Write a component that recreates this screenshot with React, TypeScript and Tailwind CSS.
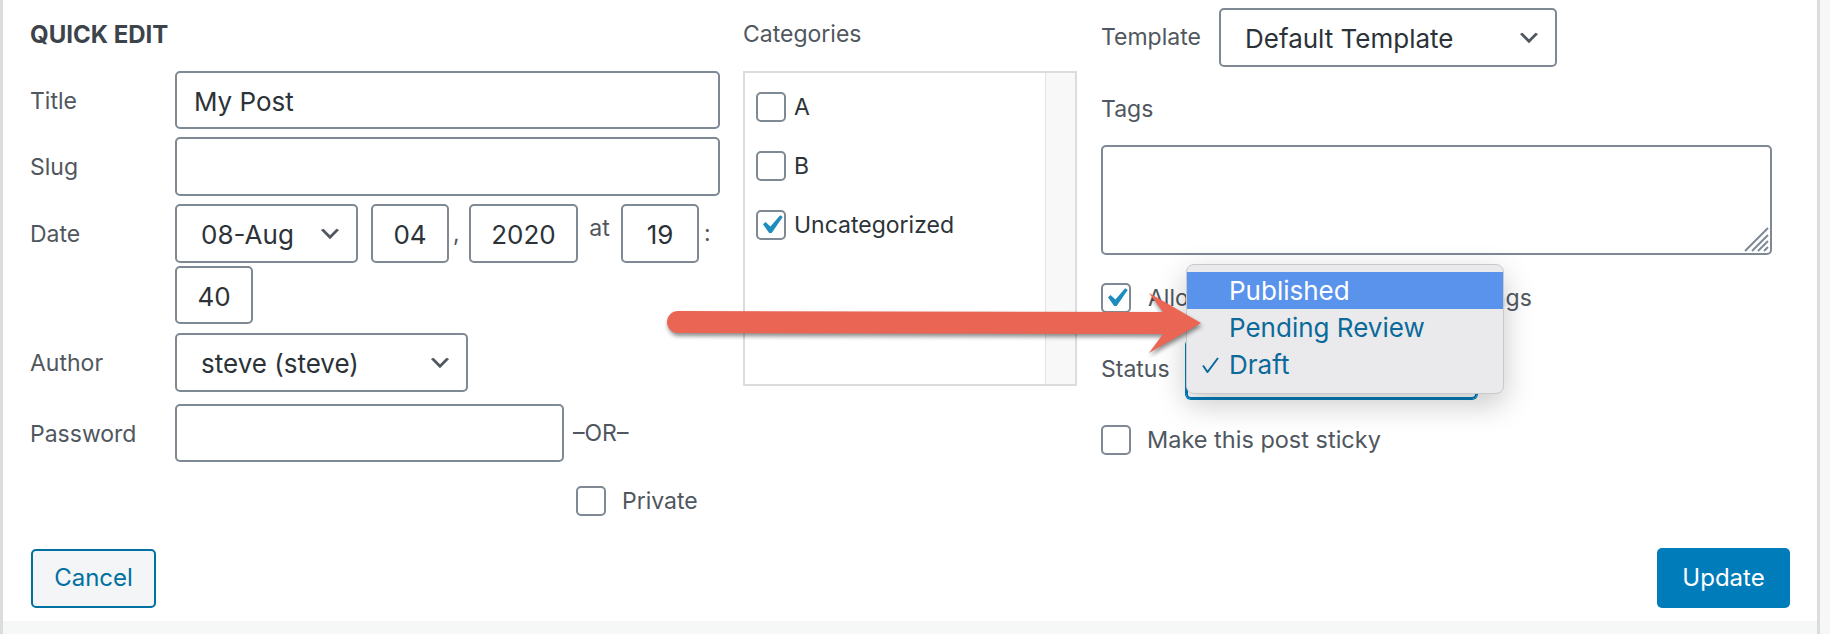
import clsx from "clsx";

type Category = { name: string; checked: boolean };

const categories: Category[] = [
  { name: "A", checked: false },
  { name: "B", checked: false },
  { name: "Uncategorized", checked: true },
];

const statusOptions = [
  { label: "Published", active: true, selected: false },
  { label: "Pending Review", active: false, selected: false },
  { label: "Draft", active: false, selected: true },
];

function Chevron() {
  return (
    <svg viewBox="0 0 20 20" className="h-[26px] w-[26px] shrink-0" fill="#50575e">
      <path d="M5 6l5 5 5-5 2 1-7 7-7-7 2-1z" />
    </svg>
  );
}

function Select({ value, className }: { value: string; className?: string }) {
  return (
    <div
      className={clsx(
        "flex h-[59px] shrink-0 items-center justify-between rounded-[5px] border-2 border-[#7e8993] bg-white pl-[24px] pr-[13px] text-[26px] text-[#2c3338]",
        className
      )}
    >
      <span className="pt-[2px]">{value}</span>
      <Chevron />
    </div>
  );
}

function TextBox({ value = "", className }: { value?: string; className?: string }) {
  return (
    <input
      readOnly
      value={value}
      className={clsx(
        "h-[58px] shrink-0 rounded-[5px] border-2 border-[#7e8993] bg-white px-[17px] pt-[2px] text-[26px] text-[#2c3338] outline-none",
        className
      )}
    />
  );
}

function Checkbox({ checked = false }: { checked?: boolean }) {
  return (
    <span className="flex h-[30px] w-[30px] shrink-0 items-center justify-center rounded-[5px] border-2 border-[#7e8993] bg-white">
      {checked && (
        <svg viewBox="0 0 20 20" className="h-[38px] w-[38px] shrink-0">
          <path fill="#1e8cbe" d="M14.83 4.89l1.34.94-5.81 8.38H9.02L5.78 9.67l1.34-1.25 2.57 2.4z" />
        </svg>
      )}
    </span>
  );
}

function Row({ label, children, className }: { label: string; children: React.ReactNode; className?: string }) {
  return (
    <div className={clsx("flex items-center", className)}>
      <span className="w-[145px] shrink-0 pt-[2px] text-[23px] text-[#50575e]">{label}</span>
      {children}
    </div>
  );
}

export default function App() {
  return (
    <div className="relative flex h-[634px] w-[1830px] overflow-hidden bg-[#f6f7f7] font-['Inter','Noto_Sans',sans-serif]">
      <div className="w-[3px] shrink-0 bg-[#dcdcde]" />

      <div className="flex h-[621px] w-[1814px] shrink-0 flex-col bg-white">
        <div className="flex h-[548px]">
          {/* left column: title, slug, date, author, password */}
          <div className="flex w-[740px] shrink-0 flex-col pl-[27px]">
            <h4 className="mt-[20px] h-[30px] text-[24px] font-bold leading-[30px] text-[#3c434a]">QUICK EDIT</h4>

            <Row label="Title" className="mt-[21px]">
              <TextBox value="My Post" className="w-[545px]" />
            </Row>
            <Row label="Slug" className="mt-[8px]">
              <TextBox className="h-[59px] w-[545px]" />
            </Row>

            <Row label="Date" className="mt-[8px]">
              <div className="flex items-center text-[23px] text-[#50575e]">
                <Select value="08-Aug" className="w-[183px]" />
                <span className="w-[13px]" />
                <TextBox value="04" className="h-[59px] w-[78px] px-0 text-center" />
                <span className="w-[20px] pl-[4px]">,</span>
                <TextBox value="2020" className="h-[59px] w-[109px] px-0 text-center" />
                <span className="w-[43px] pb-[10px] text-center">at</span>
                <TextBox value="19" className="h-[59px] w-[78px] px-0 text-center" />
                <span className="pl-[5px]">:</span>
              </div>
            </Row>
            <div className="mt-[3px] pl-[145px]">
              <TextBox value="40" className="h-[57px] w-[78px] px-0 text-center" />
            </div>

            <Row label="Author" className="mt-[9px]">
              <Select value="steve (steve)" className="h-[58px] w-[293px]" />
            </Row>

            <Row label="Password" className="mt-[12px]">
              <TextBox className="w-[389px]" />
              <em className="ml-[9px] text-[23px] not-italic text-[#50575e]">–OR–</em>
            </Row>

            <label className="ml-[546px] mt-[24px] flex h-[30px] items-center gap-[16px] text-[23px] text-[#50575e]">
              <Checkbox />
              Private
            </label>
          </div>

          {/* categories */}
          <div className="flex w-[358px] shrink-0 flex-col">
            <span className="mt-[20px] h-[28px] text-[23px] leading-[28px] text-[#50575e]">Categories</span>
            <div className="mt-[23px] flex h-[315px] w-[334px] border-2 border-[#dcdcde]">
              <ul className="flex flex-1 flex-col gap-[29px] pl-[11px] pt-[19px]">
                {categories.map((c) => (
                  <li key={c.name} className="flex h-[30px] items-center gap-[8px] text-[23px] text-[#2c3338]">
                    <Checkbox checked={c.checked} />
                    {c.name}
                  </li>
                ))}
              </ul>
              <div className="w-[30px] border-l border-[#e2e2e4] bg-[#f8f8f8]" />
            </div>
          </div>

          {/* template, tags, comments, status */}
          <div className="flex flex-1 flex-col text-[23px] text-[#50575e]">
            <div className="mt-[8px] flex items-center">
              <span className="w-[118px] shrink-0">Template</span>
              <Select value="Default Template" className="w-[338px]" />
            </div>

            <span className="mt-[28px] h-[28px] leading-[28px]">Tags</span>
            <div className="relative mt-[22px] h-[110px] w-[671px] rounded-[5px] border-2 border-[#7e8993] bg-white">
              <svg viewBox="0 0 26 26" className="absolute bottom-[1px] right-[1px] h-[26px] w-[26px]" stroke="#7e8993" strokeWidth="2">
                <path d="M25 2 L2 25 M25 9 L9 25 M25 15 L15 25 M25 21 L21 25" />
              </svg>
            </div>

            <div className="mt-[28px] flex h-[30px] items-center">
              <label className="mr-[30px] flex items-center gap-[17px]">
                <Checkbox checked />
                Allow Comments
              </label>
              <label className="flex items-center gap-[15px]">
                <Checkbox checked />
                Allow Pings
              </label>
            </div>

            <div className="mt-[27px] flex items-center">
              <span className="w-[85px] shrink-0">Status</span>
              <div className="flex h-[59px] w-[291px] items-center rounded-[5px] border-2 border-[#007cba] pl-[24px] text-[26px] text-[#2c3338] shadow-[0_0_0_1px_#007cba]">
                Draft
              </div>
            </div>

            <label className="mt-[26px] flex h-[30px] items-center gap-[16px] text-[23.5px]">
              <Checkbox />
              Make this post sticky
            </label>
          </div>
        </div>

        <div className="flex items-center justify-between pl-[28px] pr-[27px]">
          <button className="h-[59px] w-[125px] rounded-[5px] border-2 border-[#0071a1] bg-[#f3f5f6] text-[24px] text-[#0071a1]">
            Cancel
          </button>
          <button className="h-[60px] w-[133px] rounded-[5px] bg-[#007cba] text-[24px] text-white">Update</button>
        </div>
      </div>

      <div className="w-[3px] shrink-0 bg-[#dcdcde]" />
      <div className="flex-1 bg-[#f6f7f7]" />

      {/* open status menu */}
      <ul className="absolute left-[1186px] top-[264px] h-[130px] w-[318px] rounded-[8px] border border-[#c9c9cc] bg-[#eaeaec] pt-[7px] text-[26px] shadow-[0_10px_30px_rgba(0,0,0,0.22)]">
        {statusOptions.map((o) => (
          <li
            key={o.label}
            className={clsx(
              "flex h-[37px] items-center",
              o.active ? "bg-[#5a93eb] text-white" : "text-[#0b6a9a]"
            )}
          >
            <span className="flex w-[42px] justify-start pl-[15px]">
              {o.selected && (
                <svg viewBox="0 0 17 16" className="h-[16px] w-[17px]" fill="none" stroke="#0b6a9a" strokeWidth="2">
                  <path d="M1 8.5 L5.5 15 L16 1" />
                </svg>
              )}
            </span>
            {o.label}
          </li>
        ))}
      </ul>

      {/* callout arrow */}
      <svg
        viewBox="0 0 560 80"
        className="absolute left-[655px] top-[284px] h-[80px] w-[560px] drop-shadow-[1px_3px_2px_rgba(0,0,0,0.45)]"
      >
        <path d="M23 38 L512 39" stroke="#ea6553" strokeWidth="22" strokeLinecap="round" fill="none" />
        <path d="M508 28 L494 9 L546 39 L494 69 L508 50 Z" fill="#ea6553" />
      </svg>
    </div>
  );
}
